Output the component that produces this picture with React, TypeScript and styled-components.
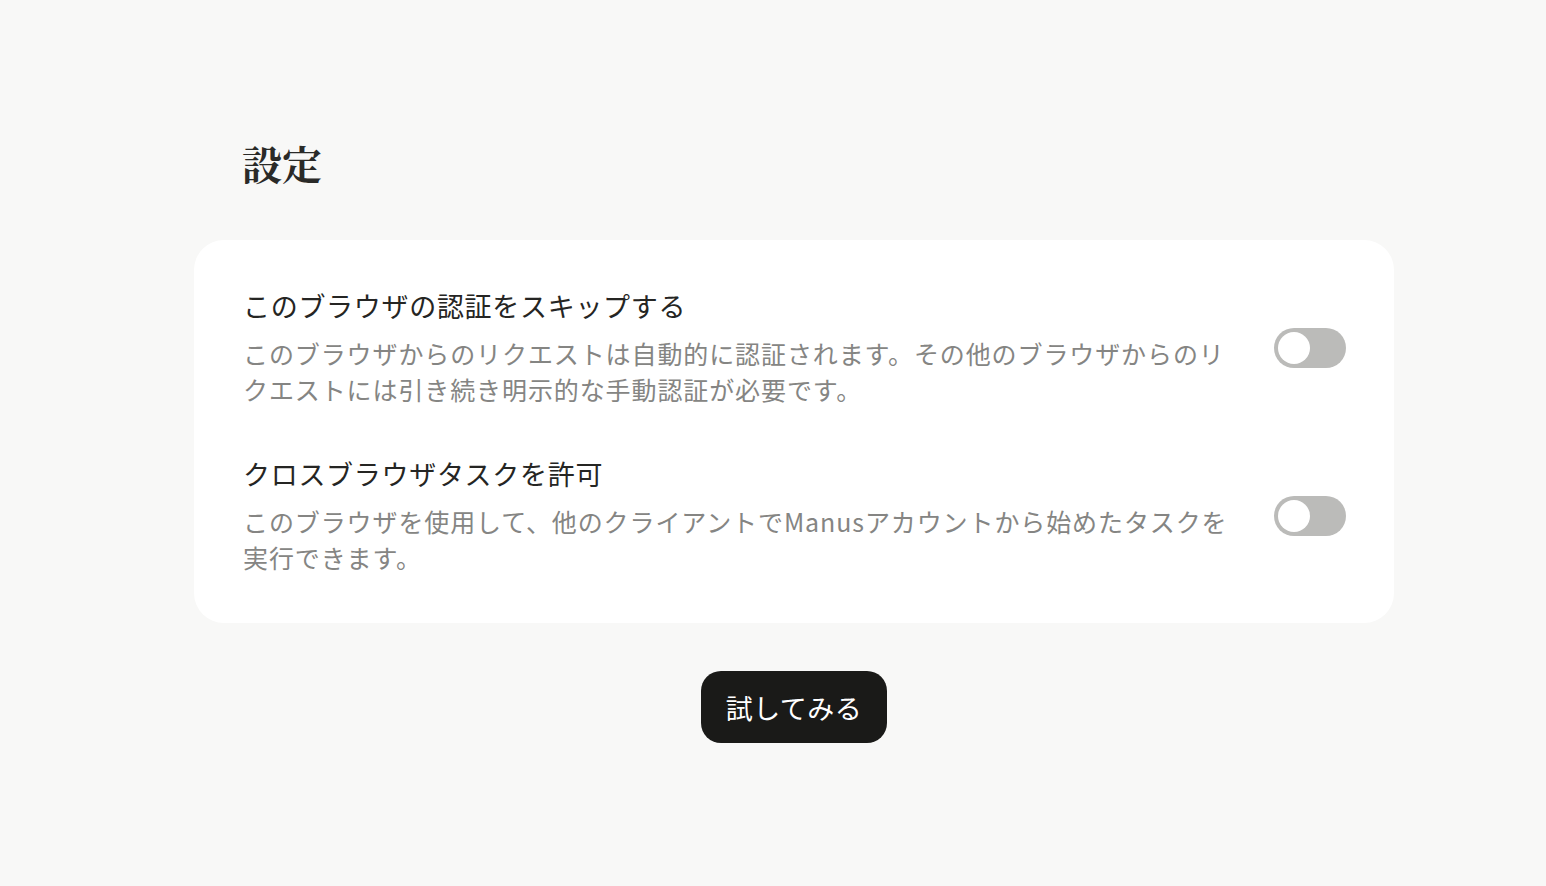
import styled, { createGlobalStyle } from 'styled-components';

const GlobalStyle = createGlobalStyle`
  html, body {
    margin: 0;
    padding: 0;
    background: #f8f8f7;
  }
  body {
    font-family: "Noto Sans CJK JP", "Noto Sans", sans-serif;
    -webkit-font-smoothing: antialiased;
  }
`;

const Page = styled.div`
  min-height: 886px;
  padding: 138px 0 0 42px;
  box-sizing: border-box;
  display: flex;
  justify-content: center;
`;

const Container = styled.div`
  width: 1200px;
  display: flex;
  flex-direction: column;
  align-items: center;
`;

const Heading = styled.h1`
  align-self: stretch;
  margin: 0 0 52px;
  padding-left: 48px;
  font-family: "Noto Serif CJK JP", "Noto Sans CJK JP", serif;
  font-size: 40px;
  line-height: 50px;
  font-weight: 700;
  color: #2a2a28;
`;

const Card = styled.div`
  align-self: stretch;
  background: #ffffff;
  border-radius: 30px;
  padding: 48px 48px 48px 49px;
  display: flex;
  flex-direction: column;
  gap: 49px;
`;

const Row = styled.div`
  display: flex;
  align-items: center;
  gap: 40px;
`;

const TextCol = styled.div`
  flex: 1;
  display: flex;
  flex-direction: column;
  gap: 11px;
`;

const Title = styled.div`
  font-size: 27px;
  line-height: 36px;
  letter-spacing: 0.7px;
  color: #252523;
`;

const Desc = styled.div`
  font-size: 25px;
  line-height: 36px;
  letter-spacing: 0.9px;
  color: #858583;
`;

const Toggle = styled.button<{ $on?: boolean }>`
  flex: none;
  width: 72px;
  height: 40px;
  border: none;
  padding: 4px;
  border-radius: 20px;
  background: ${(p) => (p.$on ? '#1a1a18' : '#bbbbb9')};
  display: flex;
  justify-content: ${(p) => (p.$on ? 'flex-end' : 'flex-start')};
  cursor: pointer;
`;

const Knob = styled.span`
  width: 32px;
  height: 32px;
  border-radius: 50%;
  background: #ffffff;
`;

const TryButton = styled.button`
  margin-top: 48px;
  height: 72px;
  padding: 0 25px;
  border: none;
  border-radius: 20px;
  background: #1a1a18;
  color: #ffffff;
  font-family: "Noto Sans CJK JP", sans-serif;
  font-size: 27px;
  letter-spacing: 0.5px;
  cursor: pointer;
`;

const settings = [
  {
    title: 'このブラウザの認証をスキップする',
    desc: 'このブラウザからのリクエストは自動的に認証されます。その他のブラウザからのリクエストには引き続き明示的な手動認証が必要です。',
  },
  {
    title: 'クロスブラウザタスクを許可',
    desc: 'このブラウザを使用して、他のクライアントでManusアカウントから始めたタスクを実行できます。',
  },
];

export default function App() {
  return (
    <>
      <GlobalStyle />
      <Page>
        <Container>
          <Heading>設定</Heading>
          <Card>
            {settings.map((s) => (
              <Row key={s.title}>
                <TextCol>
                  <Title>{s.title}</Title>
                  <Desc>{s.desc}</Desc>
                </TextCol>
                <Toggle>
                  <Knob />
                </Toggle>
              </Row>
            ))}
          </Card>
          <TryButton>試してみる</TryButton>
        </Container>
      </Page>
    </>
  );
}
